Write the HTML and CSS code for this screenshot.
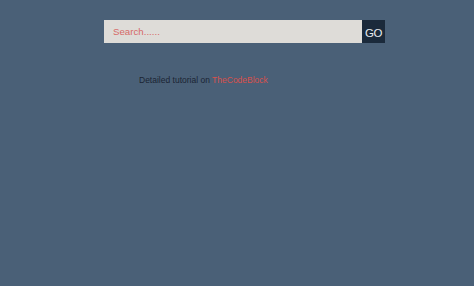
FILE: index.html
```html
<!DOCTYPE html>
<html>
<head>
<meta charset="utf-8">
<link rel="stylesheet" href="styles.css">
</head>
<body>
<div class="page">
  <form class="search">
    <input class="search-input" type="text" placeholder="Search......">
    <button class="search-btn" type="button">GO</button>
  </form>
  <p class="credit">Detailed tutorial on <a class="credit-link" href="#">TheCodeBlock</a></p>
</div>
</body>
</html>
```
FILE: styles.css
```css
html, body {
  margin: 0;
  padding: 0;
  height: 100%;
}
body {
  background: #4a6077;
  font-family: "Liberation Sans", Arial, sans-serif;
}
.page {
  padding: 20px 0 0 104px;
}
.search {
  display: flex;
  margin: 0;
}
.search-input {
  box-sizing: border-box;
  width: 258px;
  height: 23px;
  border: none;
  outline: none;
  margin: 0;
  padding: 0 0 0 9px;
  background: #dedcd8;
  font-family: "Liberation Sans", Arial, sans-serif;
  font-size: 9.7px;
  color: #333;
}
.search-input::placeholder {
  color: #d66a67;
  opacity: 1;
}
.search-btn {
  box-sizing: border-box;
  width: 23px;
  height: 23px;
  border: none;
  margin: 0;
  padding: 2px 0 0 0;
  background: #1b2a3b;
  color: #e8ecef;
  font-family: "Liberation Sans", Arial, sans-serif;
  font-size: 11.5px;
  letter-spacing: -0.5px;
}
.credit {
  margin: 31px 0 0 35px;
  font-size: 8.5px;
  line-height: 12px;
  color: #1a2433;
}
.credit-link {
  color: #d9504c;
  text-decoration: none;
}
```
